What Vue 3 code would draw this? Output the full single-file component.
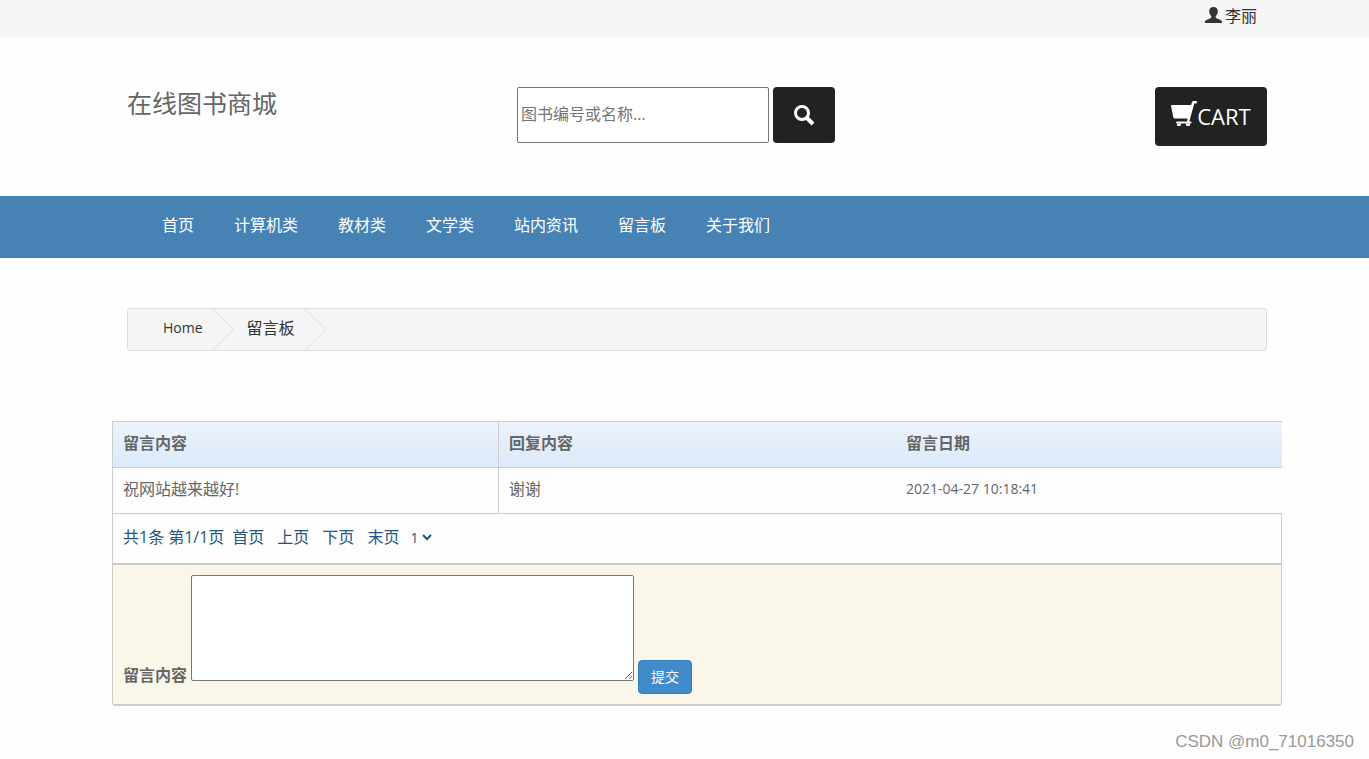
<script setup>
import { ref } from 'vue'

const keyword = ref('')
const content = ref('')
const page = ref(1)

const menus = ['首页', '计算机类', '教材类', '文学类', '站内资讯', '留言板', '关于我们']
const crumbs = ['Home', '留言板']

const messages = [
  { content: '祝网站越来越好!', reply: '谢谢', date: '2021-04-27 10:18:41' }
]
</script>

<template>
  <div class="page">
    <div class="topbar wrap">
      <a href="#" class="user">
        <svg width="17" height="16" viewBox="0 0 17 16">
          <path d="M8.500 0C11 0 12.800 1.500 12.800 4.200C12.800 6 12 7.600 11 8.800C10.400 9.600 10.500 10.800 11.500 11.300L15.500 13C16.600 13.500 17 14 17 14.800V16H0V14.800C0 14 .4 13.500 1.500 13L5.500 11.300C6.500 10.800 6.600 9.600 6 8.800C5 7.600 4.200 6 4.200 4.200C4.200 1.500 6 0 8.500 0Z" fill="#333" />
        </svg>
        <span>李丽</span>
      </a>
    </div>

    <header class="header wrap">
      <h1 class="title">在线图书商城</h1>
      <form class="search" @submit.prevent>
        <input v-model="keyword" type="text" placeholder="图书编号或名称..." aria-label="图书编号或名称" />
        <button type="submit" class="search-btn" aria-label="search">
          <svg width="21" height="21" viewBox="0 0 21 21" fill="none" stroke="#fff">
            <circle cx="8" cy="8" r="6.500" stroke-width="3" />
            <path d="M13 13L19 19" stroke-width="4" />
          </svg>
        </button>
      </form>
      <button type="button" class="cart">
        <svg width="26" height="26" viewBox="0 0 26 26">
          <path d="M1 4H20L21.200 .8Q21.500 0 22.300 0H25Q26 0 26 1.200T25 2.500H23.300L18.300 20.500H19.500Q20.500 20.500 20.500 21.500T19.500 22.500H6Q5 22.500 5 21.500T6 20.500H16L16.600 17.500H3.500Q2.600 17.500 2.400 16.500L0 5Q0 4 1 4Z" fill="#fff" />
          <path d="M6 22.500H10V24Q10 25 9 25H7Q6 25 6 24ZM15 22.500H19V24Q19 25 18 25H16Q15 25 15 24Z" fill="#fff" />
        </svg>
        <span>CART</span>
      </button>
    </header>

    <nav class="nav wrap">
      <ul>
        <li v-for="item in menus" :key="item"><a href="#">{{ item }}</a></li>
      </ul>
    </nav>

    <main class="main wrap">
      <ol class="breadcrumb">
        <li v-for="item in crumbs" :key="item">
          <a href="#">{{ item }}</a>
          <svg width="22" height="41" viewBox="0 0 22 41" fill="none" stroke="#ddd">
            <path d="M0 0L21 20.500L0 41" />
          </svg>
        </li>
      </ol>

      <table class="messages">
        <thead>
          <tr>
            <th class="col-content">留言内容</th>
            <th class="col-reply">回复内容</th>
            <th>留言日期</th>
          </tr>
        </thead>
        <tbody>
          <tr v-for="msg in messages" :key="msg.date">
            <td>{{ msg.content }}</td>
            <td>{{ msg.reply }}</td>
            <td class="date">{{ msg.date }}</td>
          </tr>
        </tbody>
      </table>

      <div class="pager">
        <span class="total">共1条</span>
        <span class="current">第1/1页</span>
        <a href="#">首页</a>
        <a href="#">上页</a>
        <a href="#">下页</a>
        <a href="#">末页</a>
        <select v-model="page" aria-label="页码">
          <option :value="1">1</option>
        </select>
      </div>

      <form class="reply" @submit.prevent>
        <label for="content">留言内容</label>
        <textarea id="content" v-model="content"></textarea>
        <button type="submit">提交</button>
      </form>
    </main>

    <footer class="footer">CSDN @m0_71016350</footer>
  </div>
</template>

<style>
body {
  margin: 0;
  background: #fefefe;
}
</style>

<style scoped>
* {
  box-sizing: border-box;
}

.page {
  font-family: 'Open Sans', 'Noto Sans CJK SC', sans-serif;
  font-size: 16px;
  line-height: 24px;
  color: #666;
}

.page a {
  color: #333;
  text-decoration: none;
}

.page input,
.page textarea,
.page select,
.page button {
  font-family: inherit;
}

ul,
ol {
  list-style: none;
  margin: 0;
  padding: 0;
}

.wrap {
  padding-left: 112px;
  padding-right: 87px;
}

/* top bar */
.topbar {
  display: flex;
  justify-content: flex-end;
  height: 37px;
  background: #f5f5f5;
}

.user {
  display: flex;
  align-items: center;
  gap: 3px;
  height: 32px;
  margin-right: 25px;
}

.user svg {
  margin-bottom: 2px;
}

/* header */
.header {
  display: grid;
  grid-template-columns: 1fr 1fr 1fr;
  align-items: start;
  padding-top: 50px;
  padding-bottom: 50px;
}

.title {
  margin: 0;
  padding-left: 15px;
  font-size: 25px;
  font-weight: 400;
  line-height: 32px;
}

.search {
  display: flex;
  align-items: center;
  gap: 4px;
  padding-left: 15px;
}

.search input {
  width: 252px;
  height: 56px;
  padding: 0 3px 2px;
  border: 1px solid #767676;
  border-radius: 2px;
  background: #fff;
  font-size: 16px;
}

.search input::placeholder {
  color: #757575;
}

.search-btn,
.cart {
  display: flex;
  align-items: center;
  justify-content: center;
  padding: 0;
  border: 0;
  border-radius: 4px;
  background: #222;
  color: #fff;
}

.search-btn {
  width: 62px;
  height: 56px;
}

.cart {
  justify-self: end;
  width: 112px;
  height: 59px;
  margin-right: 15px;
  padding-bottom: 2px;
  font-size: 22px;
  font-weight: 500;
}

.cart svg {
  margin-bottom: 4px;
}

/* nav */
.nav {
  background: #4682b4;
}

.nav ul {
  display: flex;
  gap: 40px;
  padding: 17px 0 21px 50px;
}

.nav a {
  color: #fff;
}

/* breadcrumb */
.main {
  padding-top: 50px;
}

.breadcrumb {
  display: flex;
  height: 43px;
  margin: 0 15px 70px;
  padding-left: 35px;
  border: 1px solid #ddd;
  border-radius: 3px;
  background: #f5f5f5;
}

.breadcrumb li {
  display: flex;
  align-items: center;
  gap: 10px;
  margin-right: 12px;
}

.breadcrumb a {
  padding-bottom: 3px;
}

.breadcrumb li:first-child {
  font-size: 14px;
}

/* messages */
.messages {
  width: 100%;
  table-layout: fixed;
  border-collapse: collapse;
  border-left: 1px solid #ccc;
}

.messages th,
.messages td {
  height: 46px;
  padding: 0 10px 3px;
  border-top: 1px solid #ccc;
  border-bottom: 1px solid #ccc;
  text-align: left;
}

.messages th {
  font-weight: 700;
}

.messages thead tr {
  background: linear-gradient(#ebf3fc, #dce9f9);
}

.messages th:first-child,
.messages td:first-child {
  border-right: 1px solid #ccc;
}

.col-content {
  width: 33%;
}

.col-reply {
  width: 34%;
}

.messages .date {
  font-size: 14px;
}

.pager {
  display: flex;
  align-items: center;
  gap: 13px;
  height: 50px;
  padding: 0 10px 3px;
  border: 1px solid #ccc;
  border-top: 0;
  color: #245580;
}

.pager a {
  color: #245580;
}

.pager .total {
  margin-right: -9px;
}

.pager .current {
  margin-right: -5px;
}

.pager select {
  padding: 0;
  margin-left: -6px;
  border: 0;
  background: transparent;
  color: #245580;
  font-size: 14px;
}

.reply {
  display: flex;
  align-items: flex-end;
  gap: 4px;
  padding: 10px;
  border: 1px solid #ccc;
  border-bottom-width: 2px;
  border-radius: 0 0 4px 4px;
  background: #faf6e9;
}

.reply label {
  margin-bottom: 7px;
  font-weight: 700;
}

.reply textarea {
  width: 443px;
  height: 106px;
  margin-bottom: 13px;
  border: 1px solid #767676;
  border-radius: 2px;
  background: #fff;
  font-size: 16px;
}

.reply button {
  width: 54px;
  height: 34px;
  padding: 0 0 3px;
  border: 1px solid #357ebd;
  border-radius: 4px;
  background: #428bca;
  color: #fff;
  font-size: 14px;
}

.footer {
  padding: 24px 15px 0;
  font-family: 'Liberation Sans', sans-serif;
  font-size: 17px;
  text-align: right;
  color: #999;
}
</style>
